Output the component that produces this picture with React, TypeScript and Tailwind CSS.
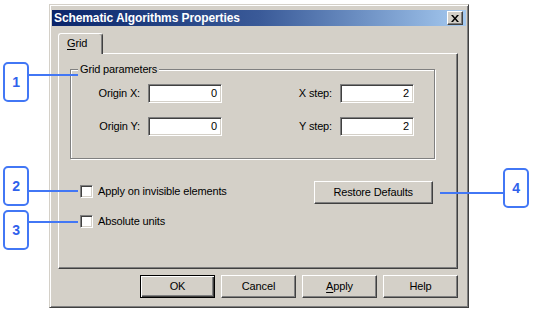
const raised =
  "border border-t-white border-l-white border-r-[#404040] border-b-[#404040] shadow-[inset_-1px_-1px_#808080]";
const sunken =
  "border border-t-[#808080] border-l-[#808080] border-r-white border-b-white shadow-[inset_1px_1px_#404040,inset_-1px_-1px_#d4d0c8]";

const Callout = ({ n, box, line }: { n: string; box: string; line: string }) => (
  <>
    <div
      className={`absolute flex items-center justify-center w-[26px] h-[40px] rounded-[5px] border-2 border-[#4277f5] bg-white text-[#2f62ec] text-[14px] font-bold ${box}`}
    >
      {n}
    </div>
    <div className={`absolute h-[2px] bg-[#4277f5] ${line}`} />
  </>
);

const Field = ({ label, value, w }: { label: string; value: string; w: string }) => (
  <div className="flex items-center">
    <div className={`${w} text-right`}>{label}</div>
    <div className={`ml-[8px] w-[74px] h-[19px] bg-white ${sunken} flex items-center justify-end pr-[4px]`}>
      {value}
    </div>
  </div>
);

const Check = ({ label }: { label: string }) => (
  <div className="flex items-center h-[13px]">
    <div className={`w-[13px] h-[13px] bg-white ${sunken}`} />
    <span className="ml-[5px]">{label}</span>
  </div>
);

const Btn = ({ children, def }: { children: React.ReactNode; def?: boolean }) => (
  <div
    className={`w-[75px] h-[23px] flex items-center justify-center ${
      def ? "border border-black shadow-[inset_1px_1px_#fff,inset_-1px_-1px_#404040,inset_-2px_-2px_#808080]" : raised
    }`}
  >
    {children}
  </div>
);

export default function App() {
  return (
    <div
      className="relative w-[533px] h-[312px] bg-white text-[11px] tracking-[-0.15px] text-black pl-[49px] pt-[4px]"
      style={{ fontFamily: '"Liberation Sans", Arial, sans-serif' }}
    >
      <div className={`w-[420px] h-[304px] bg-[#d4d0c8] border border-t-[#d4d0c8] border-l-[#d4d0c8] border-r-[#404040] border-b-[#404040] shadow-[inset_1px_1px_#fff,inset_-1px_-1px_#808080] px-[2px] pt-[5px]`}>
        {/* title bar */}
        <div className="h-[16px] flex items-center justify-between bg-gradient-to-r from-[#0a246a] via-[#3a5a98] to-[#a6caf0] pl-[2px] pr-[3px]">
          <span className="text-white font-bold text-[12px] tracking-[-0.1px]">Schematic Algorithms Properties</span>
          <div className={`w-[16px] h-[14px] bg-[#d4d0c8] ${raised} flex items-center justify-center`}>
            <svg width="8" height="7" viewBox="0 0 8 7">
              <path d="M0 0h2l2 2.5L6 0h2L5 3.5 8 7H6L4 4.5 2 7H0l3-3.5z" fill="#000" />
            </svg>
          </div>
        </div>

        {/* tabs */}
        <div className="pl-[6px] pt-[7px]">
          <div className="relative z-10 w-[45px] h-[21px] border border-b-0 border-t-white border-l-white border-r-[#404040] rounded-t-[3px] shadow-[inset_-1px_0_#808080] bg-[#d4d0c8] flex items-center pl-[8px] pb-[2px]">
            <span>
              <span className="underline underline-offset-2">G</span>rid
            </span>
          </div>
          <div className="-mt-[1px] w-[400px] h-[216px] border border-t-white border-l-white border-r-[#404040] border-b-[#404040] shadow-[inset_-1px_-1px_#808080] px-[11px] pt-[15px]">
            {/* group box */}
            <div className="relative w-[365px] h-[90px] border border-[#808080] shadow-[inset_1px_1px_#fff,1px_1px_#fff] pt-[14px]">
              <span className="absolute -top-[7px] left-[7px] px-[2px] bg-[#d4d0c8] leading-[13px]">Grid parameters</span>
              <div className="flex flex-col gap-[14px]">
                <div className="flex">
                  <Field label="Origin X:" value="0" w="w-[69px]" />
                  <Field label="X step:" value="2" w="w-[110px]" />
                </div>
                <div className="flex">
                  <Field label="Origin Y:" value="0" w="w-[69px]" />
                  <Field label="Y step:" value="2" w="w-[110px]" />
                </div>
              </div>
            </div>

            <div className="flex mt-[22px]">
              <div className="flex flex-col gap-[17px] pl-[10px] pt-[4px]">
                <Check label="Apply on invisible elements" />
                <Check label="Absolute units" />
              </div>
              <div className={`ml-[87px] w-[119px] h-[23px] ${raised} flex items-center justify-center`}>
                Restore Defaults
              </div>
            </div>
          </div>

          {/* buttons */}
          <div className="flex justify-end gap-[6px] mt-[6px] w-[400px]">
            <Btn def>OK</Btn>
            <Btn>Cancel</Btn>
            <Btn>
              <span>
                <span className="underline underline-offset-2">A</span>pply
              </span>
            </Btn>
            <Btn>Help</Btn>
          </div>
        </div>
      </div>

      <Callout n="1" box="left-[3px] top-[62px]" line="left-[28px] top-[74px] w-[50px]" />
      <Callout n="2" box="left-[3px] top-[166px]" line="left-[28px] top-[190px] w-[50px]" />
      <Callout n="3" box="left-[3px] top-[210px]" line="left-[28px] top-[221px] w-[50px]" />
      <Callout n="4" box="left-[503px] top-[168px]" line="left-[440px] top-[192px] w-[63px]" />
    </div>
  );
}
